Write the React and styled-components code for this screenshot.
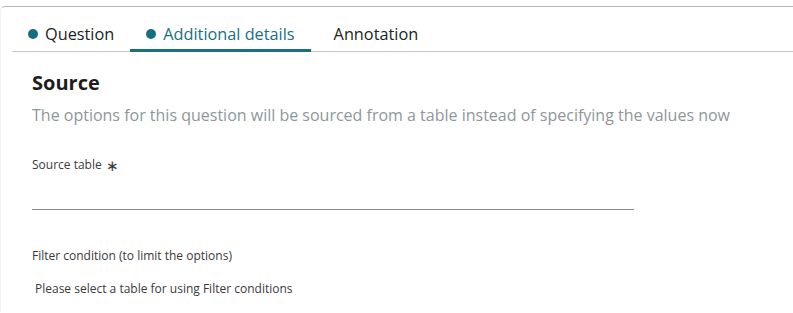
import React from "react"
import styled, { createGlobalStyle } from "styled-components"

const GlobalStyle = createGlobalStyle`
  body {
    margin: 0;
    background: #fff;
    font-family: "Open Sans", "Noto Sans", sans-serif;
  }
`

const Card = styled.div`
  margin-top: 6px;
  border-top: 1px solid #b9b9b9;
  border-left: 1px solid #f0f0f0;
  border-top-left-radius: 5px;
  height: 306px;
  box-sizing: border-box;
`

const TabBar = styled.div`
  display: flex;
  margin-left: 11px;
  border-bottom: 1px solid #c8c8c8;
`

const Tab = styled.div`
  display: flex;
  align-items: center;
  gap: 7px;
  height: 45px;
  padding: 11px 16px 0 ${(p) => (p.plain ? 23 : 16)}px;
  box-sizing: border-box;
  font-size: 16.3px;
  color: ${(p) => (p.active ? "#19707f" : "#222")};
  border-bottom: 3px solid ${(p) => (p.active ? "#19707f" : "transparent")};
  margin-bottom: -1px;
`

const Dot = styled.span`
  width: 10px;
  height: 10px;
  border-radius: 50%;
  background: #137080;
`

const Body = styled.div`
  padding: 19px 0 0 31px;
`

const Title = styled.h2`
  margin: 0;
  font-size: 20px;
  font-weight: 700;
  color: #1d1d1d;
  line-height: 24px;
`

const Subtitle = styled.p`
  margin: 8px 0 0;
  font-size: 16px;
  color: #8e979b;
  line-height: 24px;
`

const Label = styled.div`
  font-size: 12px;
  color: #3a3a3a;
  line-height: 16px;
  margin-top: ${(p) => p.top}px;
`

const Star = styled.span`
  font-size: 15px;
  margin-left: 4px;
  vertical-align: -2px;
`

const Underline = styled.div`
  width: 602px;
  height: 0;
  border-bottom: 1px solid #8a8a8a;
  margin-top: 36px;
`

const Hint = styled.div`
  font-size: 12px;
  color: #3a3a3a;
  line-height: 16px;
  margin: 17px 0 0 3px;
`

export default function App() {
  return (
    <>
      <GlobalStyle />
      <Card>
        <TabBar>
          <Tab>
            <Dot />
            Question
          </Tab>
          <Tab active>
            <Dot />
            Additional details
          </Tab>
          <Tab plain>Annotation</Tab>
        </TabBar>
        <Body>
          <Title>Source</Title>
          <Subtitle>
            The options for this question will be sourced from a table instead of specifying the values now
          </Subtitle>
          <Label top={30}>
            Source table<Star>∗</Star>
          </Label>
          <Underline />
          <Label top={38}>Filter condition (to limit the options)</Label>
          <Hint>Please select a table for using Filter conditions</Hint>
        </Body>
      </Card>
    </>
  )
}
